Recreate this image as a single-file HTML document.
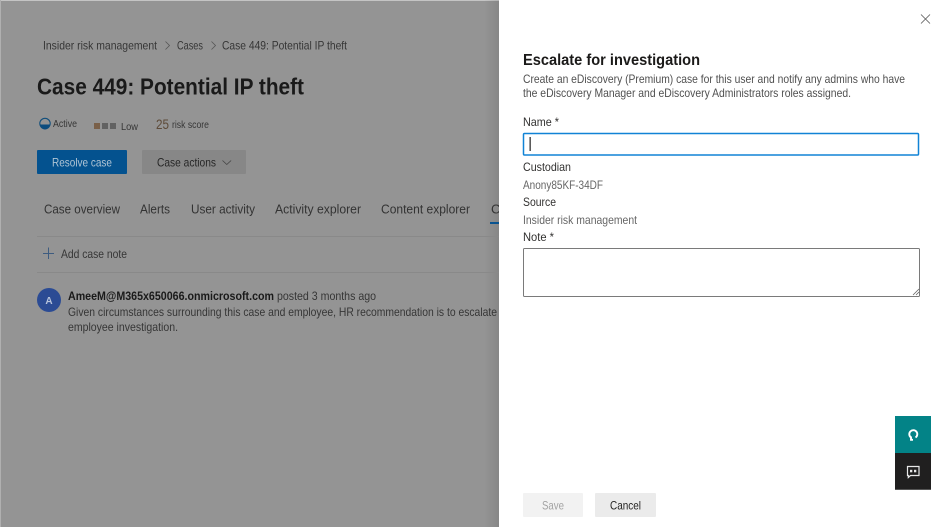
<!DOCTYPE html>
<html lang="en">
<head>
<meta charset="utf-8">
<title>Escalate for investigation</title>
<style>
html,body{margin:0;padding:0;width:940px;height:527px;overflow:hidden;background:#fff}
svg{display:block}
text{font-family:"Liberation Sans",sans-serif;white-space:pre}
</style>
</head>
<body>
<svg width="940" height="527" viewBox="0 0 940 527" xmlns="http://www.w3.org/2000/svg">
<defs>
<linearGradient id="sh" x1="0" x2="1" y1="0" y2="0">
<stop offset="0" stop-color="#000" stop-opacity="0"/>
<stop offset="1" stop-color="#000" stop-opacity=".09"/>
</linearGradient>
<filter id="b" x="-5%" y="-20%" width="110%" height="140%" color-interpolation-filters="sRGB"><feGaussianBlur stdDeviation=".35"/></filter>
</defs>

<rect width="499" height="527" fill="#949494"/>
<rect width="499" height="1" fill="#c4c4c4"/>
<rect x="0" width="1" height="527" fill="#b0b0b0"/>
<rect x="484" width="15" height="527" fill="url(#sh)"/>

<g filter="url(#b)">
<g font-size="12" fill="#363636">
<text x="43" y="49.500" textLength="114" lengthAdjust="spacingAndGlyphs">Insider risk management</text>
<text x="177" y="49.500" textLength="26" lengthAdjust="spacingAndGlyphs">Cases</text>
<text x="222" y="49.500" textLength="125" lengthAdjust="spacingAndGlyphs">Case 449: Potential IP theft</text>
</g>
<path d="M165.500 41.500l4 4-4 4M211.500 41.500l4 4-4 4" fill="none" stroke="#555" stroke-width=".8"/>
<text x="37" y="94.500" font-size="23" font-weight="700" fill="#1a1a1a" textLength="267" lengthAdjust="spacingAndGlyphs">Case 449: Potential IP theft</text>

<circle cx="45" cy="123.500" r="5.200" fill="#949494" stroke="#124f7c" stroke-width="1.100"/>
<path d="M40 124.500h10a5 5 0 0 1-10 0z" fill="#0c4c7e"/>
<text x="53" y="127" font-size="10.500" fill="#363636" textLength="24" lengthAdjust="spacingAndGlyphs">Active</text>
<rect x="94" y="123" width="6" height="6" fill="#7a6049"/>
<rect x="102" y="123" width="6" height="6" fill="#626262"/>
<rect x="110" y="123" width="6" height="6" fill="#626262"/>
<text x="121" y="130" font-size="10.500" fill="#363636" textLength="17" lengthAdjust="spacingAndGlyphs">Low</text>
<text x="156" y="129" font-size="13.500" fill="#5d4a38" textLength="13" lengthAdjust="spacingAndGlyphs">25</text>
<text x="172" y="128" font-size="10.500" fill="#363636" textLength="37" lengthAdjust="spacingAndGlyphs">risk score</text>

<rect x="37" y="150" width="90" height="24" rx="1" fill="#04528f"/>
<text x="52" y="166.500" font-size="12" fill="#b0c4d4" textLength="60" lengthAdjust="spacingAndGlyphs">Resolve case</text>
<rect x="142" y="150" width="104" height="24" rx="1" fill="#878787"/>
<text x="157" y="166.500" font-size="12" fill="#262626" textLength="59" lengthAdjust="spacingAndGlyphs">Case actions</text>
<path d="M222.500 160.500l4.300 4 4.300-4" fill="none" stroke="#444" stroke-width=".8"/>

<g font-size="13" fill="#333">
<text x="44" y="213.500" textLength="76" lengthAdjust="spacingAndGlyphs">Case overview</text>
<text x="140" y="213.500" textLength="30" lengthAdjust="spacingAndGlyphs">Alerts</text>
<text x="191" y="213.500" textLength="64" lengthAdjust="spacingAndGlyphs">User activity</text>
<text x="275" y="213.500" textLength="86" lengthAdjust="spacingAndGlyphs">Activity explorer</text>
<text x="381" y="213.500" textLength="89" lengthAdjust="spacingAndGlyphs">Content explorer</text>
<text x="491" y="213.500">C</text>
</g>
<rect x="490" y="222" width="9" height="2" fill="#0a5490"/>
<rect x="37" y="236" width="462" height="1" fill="#898989"/>
<path d="M48.500 247.500v11.500M43 253.500h11" stroke="#3e5c80" stroke-width="1"/>
<text x="61" y="258" font-size="12" fill="#363636" textLength="66" lengthAdjust="spacingAndGlyphs">Add case note</text>
<rect x="37" y="272" width="462" height="1" fill="#898989"/>

<circle cx="49" cy="300" r="12" fill="#2b4b94"/>
<text x="49" y="304" font-size="10" font-weight="700" fill="#b8c4dc" text-anchor="middle">A</text>
<text x="68" y="300" font-size="12" font-weight="700" fill="#1a1a1a" textLength="206" lengthAdjust="spacingAndGlyphs">AmeeM@M365x650066.onmicrosoft.com</text>
<text x="277" y="300" font-size="12" fill="#363636" textLength="99" lengthAdjust="spacingAndGlyphs">posted 3 months ago</text>
<text x="68" y="316" font-size="12" fill="#363636" textLength="429" lengthAdjust="spacingAndGlyphs">Given circumstances surrounding this case and employee, HR recommendation is to escalate</text>
<text x="68" y="331" font-size="12" fill="#363636" textLength="110" lengthAdjust="spacingAndGlyphs">employee investigation.</text>
</g>

<rect x="499" width="441" height="527" fill="#fff"/>

<g filter="url(#b)">
<path d="M921 14.500l9 9M930 14.500l-9 9" stroke="#555" stroke-width=".8" fill="none"/>
<text x="523" y="65" font-size="16" font-weight="700" fill="#1b1a19" textLength="177" lengthAdjust="spacingAndGlyphs">Escalate for investigation</text>
<text x="523" y="83" font-size="12" fill="#505050" textLength="382" lengthAdjust="spacingAndGlyphs">Create an eDiscovery (Premium) case for this user and notify any admins who have</text>
<text x="523" y="97" font-size="12" fill="#505050" textLength="328" lengthAdjust="spacingAndGlyphs">the eDiscovery Manager and eDiscovery Administrators roles assigned.</text>
<text x="523" y="126" font-size="12" fill="#323130" textLength="36" lengthAdjust="spacingAndGlyphs">Name *</text>
<rect x="523.500" y="133.500" width="395" height="21.500" rx="1" fill="#fff" stroke="#1183d6" stroke-width="1.500"/>
<rect x="529.500" y="137" width="1.300" height="14" fill="#333"/>
<text x="523" y="171" font-size="12" fill="#323130" textLength="48" lengthAdjust="spacingAndGlyphs">Custodian</text>
<text x="523" y="189" font-size="12" fill="#666" textLength="80" lengthAdjust="spacingAndGlyphs">Anony85KF-34DF</text>
<text x="523" y="206" font-size="12" fill="#323130" textLength="33" lengthAdjust="spacingAndGlyphs">Source</text>
<text x="523" y="224" font-size="12" fill="#666" textLength="114" lengthAdjust="spacingAndGlyphs">Insider risk management</text>
<text x="523" y="241" font-size="12" fill="#323130" textLength="31" lengthAdjust="spacingAndGlyphs">Note *</text>
<rect x="523.500" y="248.500" width="396" height="48" rx="1" fill="#fff" stroke="#7a7a7a" stroke-width="1"/>
<path d="M913 295l6-6M916 295l3-3" stroke="#666" stroke-width=".8"/>

<rect x="523" y="493" width="60" height="24" rx="1" fill="#f2f2f2"/>
<text x="542" y="509.500" font-size="12" fill="#a3a3a3" textLength="22" lengthAdjust="spacingAndGlyphs">Save</text>
<rect x="595" y="493" width="61" height="24" rx="1" fill="#ebebeb"/>
<text x="610" y="509.500" font-size="12" fill="#252423" textLength="31" lengthAdjust="spacingAndGlyphs">Cancel</text>
</g>

<rect x="895" y="416" width="36" height="37" fill="#038387"/>
<rect x="895" y="453" width="36" height="36" fill="#201f1f"/>
<rect x="895" y="489" width="36" height="1" fill="#555"/>
<path d="M910.800 437.300a4 4 0 1 1 4.700 .2" fill="none" stroke="#fff" stroke-width="1.900"/>
<path d="M911 436.500v3.300h2" fill="none" stroke="#fff" stroke-width="1.900"/>
<path d="M907.500 466.500h11.500v9h-8.500l-2.200 2v-2h-.8z" fill="none" stroke="#e8e8e8" stroke-width="1.200"/>
<rect x="910" y="469.800" width="2.300" height="2.500" fill="#e8e8e8"/>
<rect x="914" y="469.800" width="2.300" height="2.500" fill="#e8e8e8"/>
</svg>
</body>
</html>
